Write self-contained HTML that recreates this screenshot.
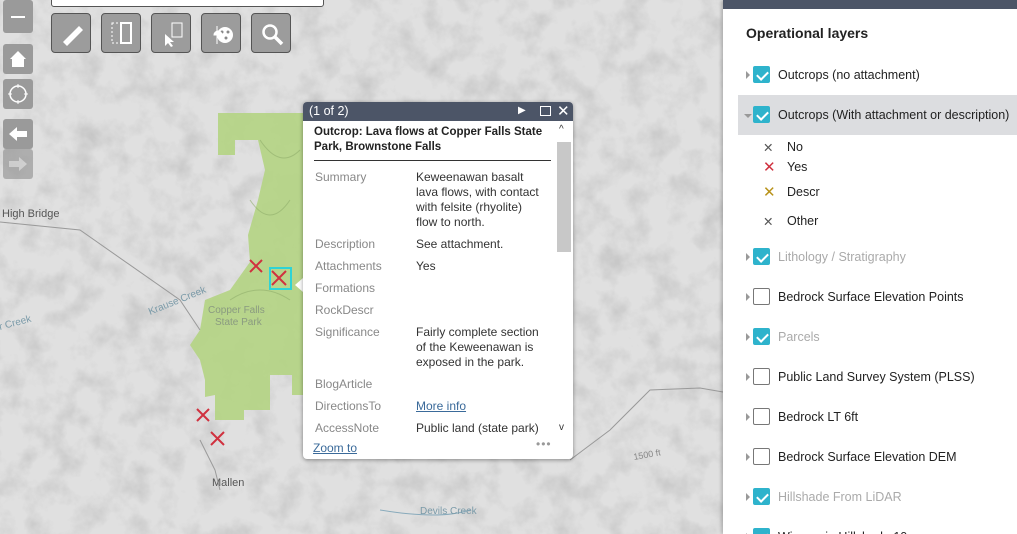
<!DOCTYPE html>
<html style="overflow:hidden"><head><meta charset="utf-8"><style>
*{margin:0;padding:0;box-sizing:border-box}
html,body{width:1017px;height:534px;overflow:hidden}
body{position:relative;background:#dedede;font-family:"Liberation Sans",sans-serif}
#map{position:absolute;left:0;top:0;width:723px;height:534px;background:#dcdcdc;overflow:hidden}
.btn{position:absolute;width:40px;height:40px;top:13px;background:#9c9c9c;border:1px solid #555;border-radius:4px}
.lb{position:absolute;left:3px;width:30px;background:#9a9a9a;border-radius:3px}
.pop{position:absolute;left:303px;top:102px;width:270px;height:357px;background:#fff;border-radius:4px;box-shadow:0 1px 4px rgba(0,0,0,.4);overflow:hidden;font-size:12px}
.ph{height:19px;background:#4c5567;color:#fff;font-size:12.5px;padding:2px 6px}
.row{position:absolute;left:12px;color:#888}
.val{position:absolute;left:113px;color:#333;line-height:15px}
#panel{position:absolute;left:723px;top:0;width:294px;height:534px;background:#fff;box-shadow:-2px 0 3px rgba(0,0,0,.2);overflow:hidden}
.lay{position:absolute;left:0;width:294px;height:40px;font-size:12.5px;color:#222}
.lay .ar{position:absolute;left:23px;top:16px;width:0;height:0;border-left:4px solid #999;border-top:4px solid transparent;border-bottom:4px solid transparent}
.lay .cb{position:absolute;left:30px;top:11px;width:17px;height:17px;border-radius:2px;border:1px solid #777;background:#fff}
.lay .cb.on{background:#2eb3cc;border-color:#2eb3cc}
.cb.on::after{content:"";position:absolute;left:5px;top:2px;width:5px;height:9px;border:solid #fff;border-width:0 2px 2px 0;transform:rotate(45deg)}
.lay .t{position:absolute;left:55px;top:13px}
.lay.g .t{color:#aaa}
.leg{position:absolute;left:40px;font-size:12.5px;color:#222}
.leg span{position:absolute;left:24px;top:0}
</style></head><body>
<div id="map">
<svg width="723" height="534" style="position:absolute;left:0;top:0">
<defs><filter id="n"><feTurbulence type="fractalNoise" baseFrequency="0.04" numOctaves="4" seed="3"/><feColorMatrix values="0 0 0 0 0.45 0 0 0 0 0.45 0 0 0 0 0.45 0 0 0 -1.8 1.05"/></filter></defs>
<rect width="723" height="534" fill="#e0e0e0"/>
<rect width="723" height="534" filter="url(#n)" opacity="0.6"/>
<polygon points="218,113 303,113 303,395 292,395 292,375 270,375 270,410 244,410 244,420 215,420 215,395 205,397 205,380 200,360 190,345 200,330 205,300 230,290 250,262 248,235 258,200 265,170 258,140 235,140 235,155 218,155" fill="#b5d487" opacity="0.95"/>
<path d="M250,200 Q270,230 290,200 M230,300 Q260,280 290,300 M260,140 Q280,170 300,150" stroke="#8fae6a" fill="none" opacity=".6"/>
<path d="M0,222 L80,230 L180,300 L200,330" stroke="#999" fill="none"/>
<path d="M200,440 L215,470 L220,490" stroke="#999" fill="none"/>
<path d="M570,460 L610,430 L650,390 L700,388 L723,392" stroke="#999" fill="none"/>
<path d="M380,510 Q440,520 470,510" stroke="#8ab" fill="none"/>
<text x="2" y="217" font-size="11" fill="#555" font-family="Liberation Sans">High Bridge</text>
<text x="212" y="486" font-size="11" fill="#555" font-family="Liberation Sans">Mallen</text>
<text x="208" y="313" font-size="10" fill="#8a9a80" font-family="Liberation Sans">Copper Falls</text>
<text x="215" y="325" font-size="10" fill="#8a9a80" font-family="Liberation Sans">State Park</text>
<text x="150" y="315" font-size="10" fill="#7a9aa8" font-family="Liberation Sans" transform="rotate(-22 150 315)">Krause Creek</text>
<text x="0" y="330" font-size="10" fill="#7a9aa8" font-family="Liberation Sans" transform="rotate(-15 0 330)">r Creek</text>
<text x="420" y="514" font-size="10" fill="#7a9aa8" font-family="Liberation Sans">Devils Creek</text>
<text x="634" y="460" font-size="9" fill="#888" font-family="Liberation Sans" transform="rotate(-10 634 460)">1500 ft</text>
<g stroke="#d0313f" stroke-width="2"><path d="M250,260l12,12M262,260l-12,12M272,271l14,14M286,271l-14,14M197,409l12,12M209,409l-12,12M211,432l13,13M224,432l-13,13"/></g>
<rect x="270" y="268" width="21" height="21" fill="none" stroke="#2ed3d6" stroke-width="2"/>
<polygon points="295,285 303,278 303,292" fill="#fff"/>
</svg>
<div style="position:absolute;left:51px;top:-4px;width:273px;height:11px;background:#fff;border:1px solid #555;border-radius:3px"></div>
<div class="lb" style="top:0;height:33px"><div style="position:absolute;left:8px;top:16px;width:14px;height:2px;background:#fff"></div></div>
<div class="lb" style="top:44px;height:30px"><svg width="30" height="30"><path d="M7,15 L15,7 L23,15 L21,15 L21,23 L9,23 L9,15Z" fill="#fff"/></svg></div>
<div class="lb" style="top:79px;height:30px"><svg width="30" height="30"><circle cx="15" cy="15" r="8" fill="none" stroke="#fff" stroke-width="1.5"/><path d="M15,5v4M15,21v4M5,15h4M21,15h4" stroke="#fff"/></svg></div>
<div class="lb" style="top:119px;height:30px"><svg width="30" height="30"><path d="M6,15 L14,8 L14,12 L24,12 L24,18 L14,18 L14,22Z" fill="#fff"/></svg></div>
<div class="lb" style="top:149px;height:30px;opacity:.7"><svg width="30" height="30"><path d="M24,15 L16,8 L16,12 L6,12 L6,18 L16,18 L16,22Z" fill="#ccc"/></svg></div>
<div class="btn" style="left:51px"><svg width="40" height="40"><path d="M11,28 L27,12 L31,16 L15,32Z" fill="#fff"/></svg></div>
<div class="btn" style="left:101px"><svg width="40" height="40"><rect x="10" y="9" width="9" height="20" fill="none" stroke="#fff" stroke-dasharray="2 2"/><rect x="19" y="9" width="10" height="20" fill="none" stroke="#fff" stroke-width="2"/></svg></div>
<div class="btn" style="left:151px"><svg width="40" height="40"><rect x="20" y="9" width="10" height="14" fill="none" stroke="#fff"/><path d="M13,20 L13,32 L16,29 L19,33 L21,32 L18,28 L22,28Z" fill="#fff"/></svg></div>
<div class="btn" style="left:201px"><svg width="40" height="40"><circle cx="23" cy="21" r="8" fill="#fff"/><circle cx="20" cy="18" r="1.5" fill="#888"/><circle cx="26" cy="18" r="1.5" fill="#888"/><circle cx="24" cy="24" r="1.5" fill="#888"/><path d="M12,21 a4,4 0 0 1 8,0Z M15,12 v18" stroke="#fff" fill="#fff"/></svg></div>
<div class="btn" style="left:251px"><svg width="40" height="40"><circle cx="18" cy="18" r="6.5" fill="none" stroke="#fff" stroke-width="2.5"/><path d="M23,23 L30,30" stroke="#fff" stroke-width="3.5"/></svg></div>
<div class="pop">
<div class="ph">(1 of 2)<span style="position:absolute;left:215px;top:3px;font-size:10px">&#9654;</span><span style="position:absolute;left:237px;top:4px;width:11px;height:10px;border:1.5px solid #fff"></span><span style="position:absolute;left:254px;top:0px;font-size:15px">&#10005;</span></div>
<div style="position:absolute;left:11px;top:23px;width:237px;font-weight:bold;font-size:11.5px;line-height:15px;color:#222;padding-bottom:5px;border-bottom:1px solid #333">Outcrop: Lava flows at Copper Falls State Park, Brownstone Falls</div>
<div style="position:absolute;left:254px;top:40px;width:14px;height:110px;background:#c8c8c8"></div>
<div style="position:absolute;left:256px;top:22px;font-size:10px;color:#333">^</div>
<div style="position:absolute;left:256px;top:320px;font-size:10px;color:#333">v</div>
<div class="row" style="top:68px">Summary</div><div class="val" style="top:68px">Keweenawan basalt<br>lava flows, with contact<br>with felsite (rhyolite)<br>flow to north.</div>
<div class="row" style="top:135px">Description</div><div class="val" style="top:135px">See attachment.</div>
<div class="row" style="top:157px">Attachments</div><div class="val" style="top:157px">Yes</div>
<div class="row" style="top:179px">Formations</div>
<div class="row" style="top:201px">RockDescr</div>
<div class="row" style="top:223px">Significance</div><div class="val" style="top:223px">Fairly complete section<br>of the Keweenawan is<br>exposed in the park.</div>
<div class="row" style="top:275px">BlogArticle</div>
<div class="row" style="top:297px">DirectionsTo</div><div class="val" style="top:297px;color:#3a6a9a;text-decoration:underline">More info</div>
<div class="row" style="top:319px">AccessNote</div><div class="val" style="top:319px">Public land (state park)</div>
<div style="position:absolute;left:10px;top:339px;color:#3a6a9a;text-decoration:underline">Zoom to</div>
<div style="position:absolute;left:233px;top:335px;color:#999;font-size:12px;letter-spacing:1px">•••</div>
</div>
</div>
<div id="panel">
<div style="position:absolute;left:0;top:0;width:294px;height:9px;background:#4c5567"></div>
<div style="position:absolute;left:23px;top:25px;font-size:14px;font-weight:bold;color:#222">Operational layers</div>
<div class="lay" style="top:55px"><div class="ar"></div><div class="cb on"></div><div class="t">Outcrops (no attachment)</div></div>
<div class="lay" style="top:95px;background:#dcdde0;left:15px"><div class="ar" style="border:4px solid transparent;border-top:4px solid #999;left:6px;top:19px"></div><div class="cb on" style="left:15px"></div><div class="t" style="left:40px">Outcrops (With attachment or description)</div></div>
<div class="leg" style="top:140px;color:#555">✕<span style="color:#222">No</span></div>
<div class="leg" style="top:158px;color:#d0313f;font-size:15px">✕<span style="color:#222;font-size:12.5px;top:2px">Yes</span></div>
<div class="leg" style="top:183px;color:#b8921a;font-size:15px">✕<span style="color:#222;font-size:12.5px;top:2px">Descr</span></div>
<div class="leg" style="top:214px;color:#555">✕<span style="color:#222">Other</span></div>
<div class="lay g" style="top:237px"><div class="ar"></div><div class="cb on"></div><div class="t">Lithology / Stratigraphy</div></div>
<div class="lay" style="top:277px"><div class="ar"></div><div class="cb"></div><div class="t">Bedrock Surface Elevation Points</div></div>
<div class="lay g" style="top:317px"><div class="ar"></div><div class="cb on"></div><div class="t">Parcels</div></div>
<div class="lay" style="top:357px"><div class="ar"></div><div class="cb"></div><div class="t">Public Land Survey System (PLSS)</div></div>
<div class="lay" style="top:397px"><div class="ar"></div><div class="cb"></div><div class="t">Bedrock LT 6ft</div></div>
<div class="lay" style="top:437px"><div class="ar"></div><div class="cb"></div><div class="t">Bedrock Surface Elevation DEM</div></div>
<div class="lay g" style="top:477px"><div class="ar"></div><div class="cb on"></div><div class="t">Hillshade From LiDAR</div></div>
<div class="lay" style="top:517px"><div class="ar"></div><div class="cb on"></div><div class="t">Wisconsin Hillshade 10m</div></div>
</div>
</body></html>
